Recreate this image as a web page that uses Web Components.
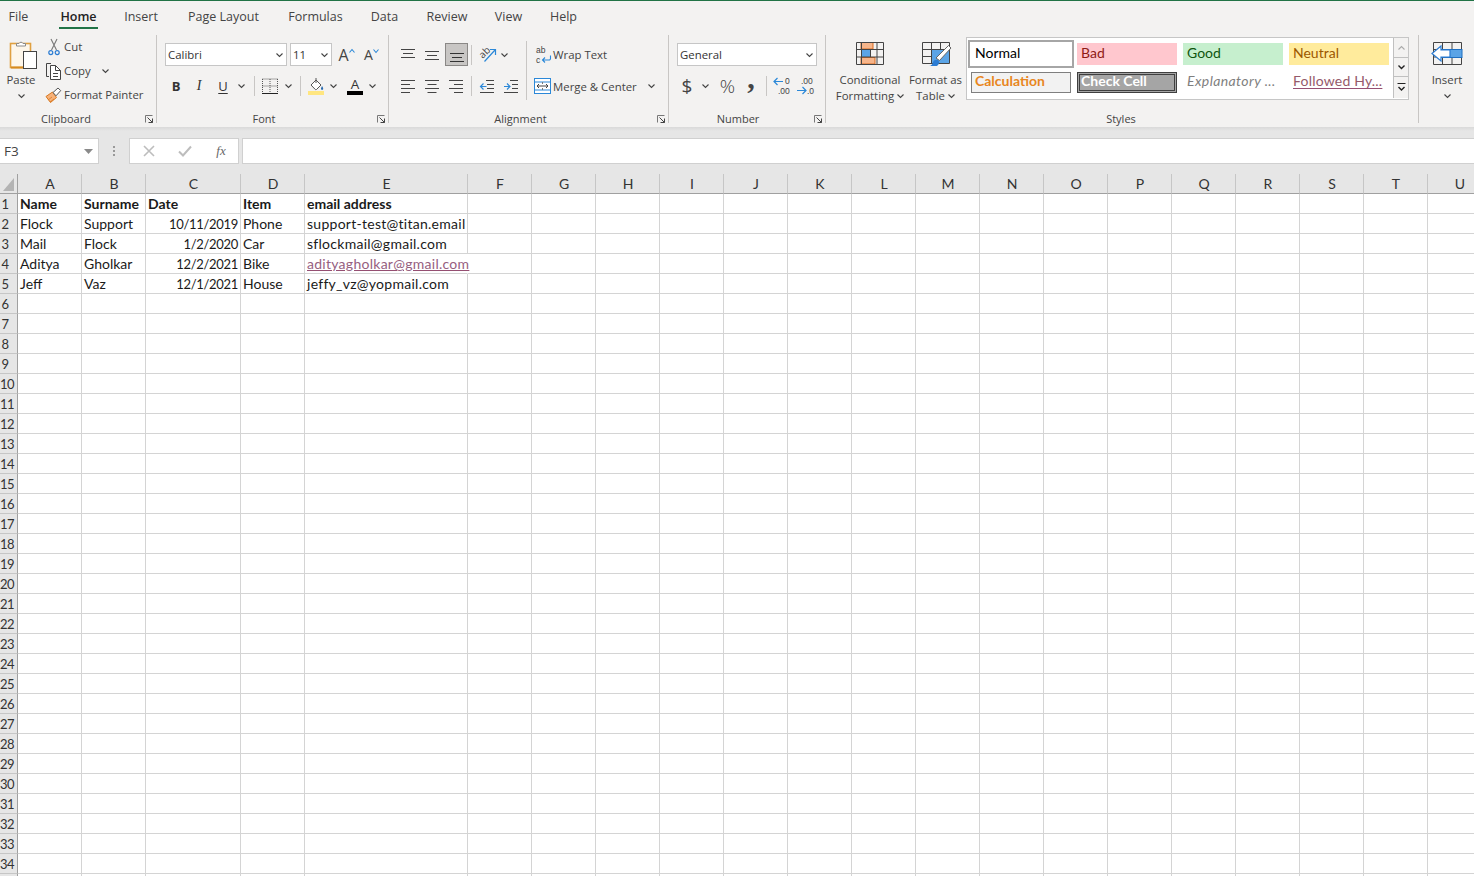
<!doctype html>
<html><head><meta charset="utf-8"><title>Excel</title>
<style>
html,body{margin:0;height:100%;overflow:hidden;background:#fff;font-family:"Open Sans","Noto Sans",sans-serif}
</style></head><body>
<xl-app></xl-app>
<script>
const UI='"Open Sans","Noto Sans",sans-serif';
const BLUE='#2b88d8', GR='#444', OR='#d86b20';
const SM='font-family="Liberation Sans" font-size="8.5" fill="#444"';
const I={
paste:[30,32,`<rect x="2.5" y="6.5" width="20" height="24" fill="#fdf6ea" stroke="#e0a040" stroke-width="1.6"/><path d="M3 30.5h19" stroke="#d68b1f" stroke-width="2"/><path d="M8.5 9V6.5h2.5a2.2 2.2 0 0 1 4 0h2.5V9z" fill="#fff" stroke="#8a8a8a"/><rect x="15.5" y="14.5" width="13" height="17" fill="#fff" stroke="#444"/>`],
cut:[12,18,`<path d="M3 1l5.5 11M9 1L3.5 12" stroke="#777" stroke-width="1.1" fill="none"/><circle cx="2.8" cy="14.6" r="2" fill="none" stroke="#2b7cd3" stroke-width="1.2"/><circle cx="9.2" cy="14.6" r="2" fill="none" stroke="#2b7cd3" stroke-width="1.2"/>`],
copy:[17,18,`<path d="M6 1.5H1.5v13H4" fill="none" stroke="#444"/><path d="M5.5 3.5h5l5 5v9h-10z" fill="#fff" stroke="#444"/><path d="M10.5 3.5v5h5M8 11.5h5M8 14.5h5" fill="none" stroke="#444"/>`],
painter:[17,16,`<path d="M1 9.5l6.5-4.5 4 5.5-6 5z" fill="#f7b27a" stroke="#d8781f"/><path d="M3 13l4-3M5 15l4-3" stroke="#d8781f" stroke-width=".8"/><path d="M8 5.5l5-4.5 2.7 2.6-4.7 5.2z" fill="#fff" stroke="#555"/>`],
borders:[16,17,`<path d="M.5 1h15M.5 8h15M.5 1v14M8 1v14M15.5 1v14" stroke="#555" stroke-dasharray="1 1" fill="none"/><path d="M0 15.5h16" stroke="#222"/>`],
fill:[17,18,`<path d="M3 8l5-5 5 5-4.5 4.500a1 1 0 0 1-1.200 0z" fill="#fff" stroke="#555"/><path d="M8 1v5" stroke="#555"/><path d="M14 9c1 1.500 1.600 2.400 1 3.400-.6.800-2 .6-2-.6 0-1 .6-1.800 1-2.800z" fill="#2b6cb0"/><rect x="0" y="14" width="16" height="4" fill="#ffe680"/>`],
atop:[14,14,`<path d="M0 1.500h14M2 5.500h10M0 9.500h14" stroke="#444"/>`],
amid:[14,14,`<path d="M0 3.500h14M2 7.500h10M0 11.500h14" stroke="#444"/>`],
abot:[14,14,`<path d="M0 5.500h14M2 9.500h10M0 13.500h14" stroke="#333"/>`],
aleft:[14,14,`<path d="M0 1.500h14M0 5.500h9M0 9.500h14M0 13.500h9" stroke="#444"/>`],
acen:[14,14,`<path d="M0 1.500h14M2.500 5.500h9M0 9.500h14M2.500 13.500h9" stroke="#444"/>`],
aright:[14,14,`<path d="M0 1.500h14M5 5.500h9M0 9.500h14M5 13.500h9" stroke="#444"/>`],
outd:[14,14,`<path d="M6 1.500h8M7 5.500h7M7 9.500h7M0 13.500h14" stroke="#444"/><path d="M.5 7.500h6M3.500 4.500l-3 3 3 3" fill="none" stroke="${BLUE}" stroke-width="1.200"/>`],
ind:[14,14,`<path d="M6 1.500h8M8 5.500h6M8 9.500h6M0 13.500h14" stroke="#444"/><path d="M0 7.500h6M3 4.500l3 3-3 3" fill="none" stroke="${BLUE}" stroke-width="1.200"/>`],
orient:[17,18,`<text x="0" y="10" transform="rotate(-45 5.500 7)" font-family="Open Sans" font-size="10" fill="#444">ab</text><path d="M5.500 15.500L16 4M11 3.500h5.500V9" fill="none" stroke="${BLUE}" stroke-width="1.200"/>`],
wrap:[15,18,`<text x="0" y="7" ${SM}>ab</text><text x="0" y="17" ${SM}>c</text><path d="M14.500 9.500v3a1.500 1.500 0 0 1-1.500 1.500H6.500M9 11.500l-2.500 2.500L9 16.500" fill="none" stroke="${BLUE}" stroke-width="1.100"/>`],
merge:[17,16,`<rect x=".5" y=".5" width="16" height="15" fill="#fff" stroke="${BLUE}"/><path d="M.5 4h16M.5 12h16" stroke="${BLUE}"/><path d="M8.500 4v2M8.500 10v2" stroke="#777"/><path d="M3 8h11M5 6l-2 2 2 2M12 6l2 2-2 2" fill="none" stroke="#444"/>`],
dinc:[17,18,`<path d="M0 4.500h9M3.500 1L0 4.500 3.500 8" fill="none" stroke="${BLUE}" stroke-width="1.200"/><text x="11" y="7" ${SM}>0</text><text x="4" y="17" ${SM}>.00</text>`],
ddec:[17,18,`<text x="4" y="7" ${SM}>.00</text><path d="M0 13.500h9M5.500 10L9 13.500 5.500 17" fill="none" stroke="${BLUE}" stroke-width="1.200"/><text x="10" y="17" ${SM}>.0</text>`],
cf:[28,23,`<rect x="5" y=".5" width="12" height="6.500" fill="#f7b58a" stroke="${OR}"/><rect x="5" y="15.500" width="14" height="6.500" fill="#f7b58a" stroke="${OR}"/><rect x="5.500" y="8" width="9" height="7" fill="#5ba4e6"/><path d="M.5.500h27v22H.5zM.5 7.500h27M.5 15h27M5.500.5v22M14.500 7v8M21 .5v22" fill="none" stroke="#444"/>`],
ft:[30,25,`<path d="M.5.500h27v21H.5zM.5 7.500h27M.5 14.500h27M9.500.5v21M18.500.5v21" fill="none" stroke="#444"/><rect x="10" y="8" width="17" height="13" fill="#5ba4e6"/><path d="M14 16L26.500 3.500l2.500 2.500L17.500 18.500z" fill="#fff" stroke="#666"/><path d="M7 24c2.500 0 3.500-2 4-4 1-2 3.500-3 5.500-1.500 1 1.500 1 3.500-1.500 5.500z" fill="#2b7cd3"/>`],
insert:[32,23,`<path d="M2.500.5h28v22h-28zM2.500 7.500h28M2.500 15h28M11.500.5v22M21 .5v22" fill="none" stroke="#444"/><rect x="11" y="7.500" width="20" height="8" fill="#5ba4e6" stroke="#1f6fc0"/><path d="M10 4L1 11.500 10 19v-4h9V8h-9z" fill="#fff" stroke="#2b7cd3" stroke-width="1.200"/>`],
launch:[8,8,`<path d="M.5 7.500V.5h7" fill="none" stroke="#777"/><path d="M2.500 2.500l5 5M7.500 3.500v4h-4" fill="none" stroke="#444"/>`],
chev:[7,4,`<path d="M.5.500l3 3 3-3" fill="none" stroke="#444" stroke-width="1.100"/>`],
chevup:[7,4,`<path d="M.5 3.500l3-3 3 3" fill="none" stroke="#aaa" stroke-width="1.100"/>`],
chevb:[7,4,`<path d="M.5.500l3 3 3-3" fill="none" stroke="#222" stroke-width="1.400"/>`],
more:[9,9,`<path d="M.5.500h8" stroke="#222"/><path d="M1.500 4l3 3 3-3" fill="none" stroke="#222" stroke-width="1.400"/>`],
caret:[9,5,`<path d="M0 0h9L4.500 5z" fill="#8a8a8a"/>`],
x:[12,12,`<path d="M1 1l10 10M11 1L1 11" stroke="#bdbdbd" stroke-width="1.600"/>`],
check:[14,12,`<path d="M1 6.500l4 4L13 1.500" fill="none" stroke="#bdbdbd" stroke-width="2"/>`],
growch:[6,4,`<path d="M.5 3.500l2.500-3 2.500 3" fill="none" stroke="#2b88d8" stroke-width="1.100"/>`],
shrinkch:[6,4,`<path d="M.5.500l2.500 3 2.500-3" fill="none" stroke="#2b88d8" stroke-width="1.100"/>`],
corner:[11,13,`<path d="M11 0v13H0z" fill="#b4b4b4"/>`]
};

function def(name,css,html,extra){
  customElements.define(name,class extends HTMLElement{
    constructor(){super();const s=this.attachShadow({mode:'open'});
      s.innerHTML=`<style>${css}</style>`+(typeof html==='function'?html(this):html);}
    connectedCallback(){extra&&extra(this)}
  });
}
customElements.define('xl-icon',class extends HTMLElement{
  constructor(){super();this.attachShadow({mode:'open'})}
  connectedCallback(){const [w,h,b]=I[this.getAttribute('name')];
    this.shadowRoot.innerHTML=`<style>:host{display:block;width:${w}px;height:${h}px;flex:none}svg{display:block;overflow:visible}</style><svg width="${w}" height="${h}" viewBox="0 0 ${w} ${h}">${b}</svg>`}
});
customElements.define('xl-tab',class extends HTMLElement{
  constructor(){super();this.attachShadow({mode:'open'})}
  connectedCallback(){const a=this.hasAttribute('active');
    this.shadowRoot.innerHTML=`<style>:host{display:flex;flex:none;width:${this.getAttribute('w')}px;height:29px;justify-content:center}
    span{display:block;font:${a?600:400} 12.5px/31px ${UI};color:${a?'#222':'#444'};white-space:nowrap;${a?'border-bottom:2px solid #217346;height:26px;padding:0 1px':''}}</style><span><slot></slot></span>`}
});
def('xl-tabs',`:host{display:flex;height:29px;background:#f3f2f1;border-top:1px solid #217346}`,`<slot></slot>`);
customElements.define('xl-group',class extends HTMLElement{
  constructor(){super();this.attachShadow({mode:'open'})}
  connectedCallback(){const nl=this.hasAttribute('nolaunch');
    this.shadowRoot.innerHTML=`<style>:host{display:block;flex:none;box-sizing:border-box;width:${this.getAttribute('w')}px;height:88px;margin-top:5px;position:relative;${this.hasAttribute('last')?'':'border-right:1px solid #c8c6c4'}}
    .b{height:76px}.f{height:12px;font:11px/16px ${UI};color:#444;text-align:center;padding-right:${this.getAttribute('pr')||0}px}
    xl-icon{position:absolute;right:3px;bottom:0}</style>
    <div class="b"><slot></slot></div><div class="f">${this.getAttribute('label')||''}</div>${nl?'':'<xl-icon name="launch"></xl-icon>'}`}
});
const base=`:host{display:block;height:76px;font:11.4px/16px ${UI};color:#444}
.row{display:flex;align-items:center;height:24px}
.c{display:flex;flex:none;justify-content:center;align-items:center}
.t{white-space:nowrap}
.sep{flex:none;width:1px;height:20px;background:#c8c6c4}
.sel{box-sizing:border-box;flex:none;align-self:flex-start;display:flex;align-items:center;justify-content:space-between;height:23px;background:#fff;border:1px solid #c6c6c6;padding:0 3px 0 2px;color:#333}
`;
def('xl-clipboard',base+`:host{display:flex}
.p{width:42px;display:flex;flex-direction:column;align-items:center}
.p xl-icon:first-child{margin:2px 0 3px 4px}
.p .lb{height:16px}.p xl-icon:last-child{margin-top:6px}
.r{margin-left:3px}.r .c{width:19px;justify-content:flex-start}`,`
<div class="p"><xl-icon name="paste"></xl-icon><div class="t lb">Paste</div><xl-icon name="chev"></xl-icon></div>
<div class="r">
<div class="row"><div class="c"><xl-icon name="cut" style="margin-left:3px"></xl-icon></div><div class="t">Cut</div></div>
<div class="row"><div class="c"><xl-icon name="copy"></xl-icon></div><div class="t" style="width:38px">Copy</div><xl-icon name="chev"></xl-icon></div>
<div class="row"><div class="c"><xl-icon name="painter"></xl-icon></div><div class="t">Format Painter</div></div>
</div>`);
def('xl-font',base+`:host{padding-top:8px;height:68px}
.row{margin-left:8px}.r2{margin-top:7px}
.bt{font-size:13px;color:#333}
.A{font-size:16px;color:#444}
.fc{display:flex;flex-direction:column;align-items:center;font-size:13.5px;line-height:14px;color:#333}
.fc i{display:block;width:16px;height:4px;background:#000}`,`
<div class="row">
<div class="sel" style="width:122px"><span>Calibri</span><xl-icon name="chev"></xl-icon></div>
<div class="sel" style="width:42px;margin-left:3px"><span>11</span><xl-icon name="chev"></xl-icon></div>
<div class="c A" style="margin-left:7px;width:15px;align-items:flex-start">A<xl-icon name="growch" style="margin-top:2px"></xl-icon></div>
<div class="c A" style="margin-left:11px;width:13px;font-size:14px;align-items:flex-start">A<xl-icon name="shrinkch" style="margin-top:2px"></xl-icon></div>
</div>
<div class="row r2">
<div class="c bt" style="width:22px;font-weight:700">B</div>
<div class="c bt" style="width:24px;font:italic 14px 'Liberation Serif',serif">I</div>
<div class="c bt" style="width:24px;text-decoration:underline;text-underline-offset:2px">U</div>
<div class="c" style="width:12px"><xl-icon name="chev"></xl-icon></div>
<div class="sep" style="margin-left:7px"></div>
<div class="c" style="margin-left:7px;width:16px"><xl-icon name="borders"></xl-icon></div>
<div class="c" style="width:20px"><xl-icon name="chev"></xl-icon></div>
<div class="sep" style="margin-left:2px"></div>
<div class="c" style="margin-left:7px;width:17px"><xl-icon name="fill"></xl-icon></div>
<div class="c" style="width:17px"><xl-icon name="chev"></xl-icon></div>
<div class="c fc" style="margin-left:5px;width:16px">A<i></i></div>
<div class="c" style="width:18px"><xl-icon name="chev"></xl-icon></div>
</div>`);
def('xl-alignment',base+`:host{display:flex}
.l{width:137px;padding-top:8px}.row{height:24px}.r2{margin-top:7px}
.w24{width:24px}.on{width:23px;box-sizing:border-box;height:23px;background:#c8c6c4;border:1px solid #8a8886;margin-left:1px;align-self:flex-start}
.v{flex:none;width:1px;height:59px;margin-top:6px;background:#c8c6c4}
.r{padding-top:8px}`,`
<div class="l">
<div class="row" style="margin-left:7px">
<div class="c w24"><xl-icon name="atop"></xl-icon></div><div class="c w24"><xl-icon name="amid"></xl-icon></div>
<div class="c on"><xl-icon name="abot"></xl-icon></div><div class="sep" style="margin-left:3px"></div>
<div class="c" style="margin-left:7px;width:17px"><xl-icon name="orient"></xl-icon></div><div class="c" style="width:16px"><xl-icon name="chev"></xl-icon></div></div>
<div class="row r2" style="margin-left:7px">
<div class="c w24"><xl-icon name="aleft"></xl-icon></div><div class="c w24"><xl-icon name="acen"></xl-icon></div><div class="c w24"><xl-icon name="aright"></xl-icon></div>
<div class="sep" style="margin-left:3px"></div>
<div class="c" style="margin-left:8px;width:14px"><xl-icon name="outd"></xl-icon></div><div class="c" style="margin-left:10px;width:14px"><xl-icon name="ind"></xl-icon></div></div>
</div>
<div class="v"></div>
<div class="r">
<div class="row" style="margin-left:9px"><xl-icon name="wrap"></xl-icon><div class="t" style="margin-left:2px">Wrap Text</div></div>
<div class="row r2" style="margin-left:7px"><xl-icon name="merge"></xl-icon><div class="t" style="margin-left:2px;width:93px;padding-top:2px;box-sizing:content-box">Merge &amp; Center</div><div class="c" style="width:10px"><xl-icon name="chev"></xl-icon></div></div>
</div>`);
def('xl-number',base+`:host{padding-top:8px;height:68px}
.row{margin-left:8px}.r2{margin-top:7px}
.s{font-size:19px;font-weight:400;color:#444}`,`
<div class="row"><div class="sel" style="width:140px"><span>General</span><xl-icon name="chev"></xl-icon></div></div>
<div class="row r2">
<div class="c s" style="width:20px">$</div><div class="c" style="width:16px"><xl-icon name="chev"></xl-icon></div>
<div class="c s" style="width:29px;font-size:19px;font-weight:300">%</div><div class="c s" style="width:18px;font:700 30px/14px 'Liberation Serif',serif;transform:translateY(-8px)">,</div>
<div class="sep" style="margin-left:6px"></div>
<div class="c" style="margin-left:7px;width:17px"><xl-icon name="dinc"></xl-icon></div>
<div class="c" style="margin-left:6px;width:17px"><xl-icon name="ddec"></xl-icon></div>
</div>`);
def('xl-bigbtn',base+`:host{flex:none;display:flex;flex-direction:column;align-items:center;width:var(--w,62px);text-align:center}
.ic{height:30px;margin:7px 0 0 var(--ml,0);display:flex;justify-content:center}
.lab{white-space:nowrap}
.ln{display:flex;align-items:center;justify-content:center;gap:3px;height:16px}`,
h=>{const [a,b]=(h.getAttribute('label')||'').split('|');return `<div class="ic"><xl-icon name="${h.getAttribute('icon')}"></xl-icon></div>
<div class="lab"><div class="ln">${a}</div><div class="ln">${b?b+' <xl-icon name="chev"></xl-icon>':'<xl-icon name="chev"></xl-icon>'}</div></div>`});
def('xl-gallery',base+`:host{box-sizing:border-box;flex:none;width:443px;height:63px;margin-top:2px;background:#fff;border:1px solid #c6c6c6;display:flex;font-size:14px;line-height:20px}
.g{display:grid;grid-template-columns:109px 106px 106px 105px;grid-template-rows:28px 22px;row-gap:3px;margin:2px 0 0 1px;width:426px;font-family:Lato,"Open Sans",sans-serif}
.s{box-sizing:border-box;height:22px;width:100px;padding:0 0 2px 4px;align-self:center;display:flex;align-items:center;white-space:nowrap}
.n{width:106px;height:28px;padding-left:5px;border:2px solid #a6a6a6;color:#000}
.bad{background:#ffc7ce;color:#8f1a16}.good{background:#c6efce;color:#0f560f}.neu{background:#ffeb9c;color:#9c5700}
.calc{margin-left:3px;background:#f2f2f2;border:1px solid #7f7f7f;padding-left:3px;color:#e8861e;font-weight:700;height:21px}
.chk{background:#a5a5a5;border:3px double #3f3f3f;padding-left:1px;color:#fff;font-weight:700;height:21px}
.exp{color:#7f7f7f;font-style:italic;padding-left:4px;letter-spacing:.4px}
.fol{color:#955a6a;letter-spacing:.2px}
.fol u{text-underline-offset:2px;text-decoration-color:#954f72}
.sb{flex:none;width:15px;margin-left:-1px;display:flex;flex-direction:column}
.sb div{box-sizing:border-box;flex:none;display:flex;align-items:center;justify-content:center;border:1px solid #c0c0c0;border-right:0;background:#f3f2f1;margin-bottom:-1px}`,`
<div class="g">
<div class="s n">Normal</div><div class="s bad">Bad</div><div class="s good">Good</div><div class="s neu">Neutral</div>
<div class="s calc">Calculation</div><div class="s chk">Check Cell</div><div class="s exp">Explanatory ...</div><div class="s fol"><u>Followed Hy...</u></div>
</div>
<div class="sb"><div style="height:20px;border-top:0"><xl-icon name="chevup"></xl-icon></div><div style="height:20px"><xl-icon name="chevb"></xl-icon></div><div style="height:22px;border-bottom:0"><xl-icon name="more"></xl-icon></div></div>`);
def('xl-styles',`:host{display:flex;height:76px}
.cf{margin-left:10px;--w:68px}.ft{--w:62px;margin-left:1px;--w:61px;--ml:2px}`,`
<xl-bigbtn class="cf" icon="cf" label="Conditional|Formatting"></xl-bigbtn>
<xl-bigbtn class="ft" icon="ft" label="Format as|Table"></xl-bigbtn>
<xl-gallery></xl-gallery>`);
def('xl-ribbon',`:host{display:flex;height:97px;background:#f3f2f1}`,`<slot></slot>`);
def('xl-formula',`:host{display:flex;flex:none;box-sizing:border-box;height:47px;padding-top:11px;background:linear-gradient(#d9d9d9 0,#e6e6e6 4px);font:13.5px/24px ${UI};color:#444}
.box{box-sizing:border-box;height:26px;background:#fff;border:1px solid #d0d0d0;flex:none;display:flex;align-items:center}
.nm{width:99px;padding:0 5px 0 4px;justify-content:space-between;border-left:0}
.d{width:30px;height:26px;display:flex;flex-direction:column;align-items:center;justify-content:center;gap:2px;flex:none}
.d i{width:2px;height:2px;background:#999;display:block}
.b{width:110px}.b span{flex:none;width:36px;display:flex;justify-content:center}
.fx{font:italic 13px "Liberation Serif",serif;color:#666}
.f{flex:1;margin-left:3px;border-right:0}`,`
<div class="box nm"><span>F3</span><xl-icon name="caret"></xl-icon></div>
<div class="d"><i></i><i></i><i></i></div>
<div class="box b"><span style="margin-left:1px"><xl-icon name="x"></xl-icon></span><span><xl-icon name="check"></xl-icon></span><span class="fx">fx</span></div>
<div class="box f"></div>`);
const COLS=[['A',64],['B',64],['C',95],['D',64],['E',163]];
'FGHIJKLMNOPQRST'.split('').forEach(c=>COLS.push([c,64]));COLS.push(['U',64]);
const DATA={1:['Name','Surname','Date','Item','email address'],
2:['Flock','Support','10/11/2019','Phone','support-test@titan.email'],
3:['Mail','Flock','1/2/2020','Car','sflockmail@gmail.com'],
4:['Aditya','Gholkar','12/2/2021','Bike','adityagholkar@gmail.com'],
5:['Jeff','Vaz','12/1/2021','House','jeffy_vz@yopmail.com']};
def('xl-sheet',`:host{display:block;flex:1;overflow:hidden;background:#fff;font:14px/19px Lato,"Open Sans",sans-serif;color:#1a1a1a}
.g{display:grid;grid-template-columns:18px ${COLS.map(c=>c[1]+'px').join(' ')};grid-auto-rows:20px;width:max-content}
.g>div{box-sizing:border-box;white-space:nowrap;padding:0 2px}
.g>.h{background:#e6e6e6;color:#333;border-right:1px solid #c6c6c6;border-bottom:1px solid #a0a0a0;text-align:center;padding:0 0 0 1px}
.k{background:#e6e6e6;display:flex;justify-content:flex-end;align-items:flex-end;border-right:1px solid #a0a0a0;border-bottom:1px solid #a0a0a0;padding:0 3px 2px 0!important}
.r{background:#e6e6e6;color:#333;border-right:1px solid #a0a0a0;border-bottom:1px solid #c6c6c6;padding:1px 0 0!important;display:flex;font-size:13px;letter-spacing:-.6px}
.r span{display:block;width:10px;flex:none;text-align:center}
.r span.w{width:14px}
.c{border-right:1px solid #d4d4d4;border-bottom:1px solid #d4d4d4}
.b{font-weight:700}.g>.n{text-align:right;font-size:13px;letter-spacing:-.3px;padding-top:1px}
.e{letter-spacing:.27px}
.o{border-right-color:transparent}
a{color:#96607f;text-decoration:underline;text-decoration-color:#954f72;text-underline-offset:1px}`,
()=>{let s='<div class="g"><div class="k"><xl-icon name="corner"></xl-icon></div>';
 COLS.forEach(c=>s+=`<div class="h">${c[0]}</div>`);
 for(let r=1;r<=35;r++){s+=`<div class="r">${r<35?`<span class="${r>9?'w':''}">${r}</span>`:''}</div>`;
  COLS.forEach((c,i)=>{const v=DATA[r]&&DATA[r][i];let cl='c';let t=v||'';
   if(r==1&&v)cl+=' b';if(r>1&&i==2&&v)cl+=' n';if(r>1&&i==4&&v)cl+=' e';
   if(r==4&&i==4){cl+=' o';t=`<a>${v}</a>`}
   s+=`<div class="${cl}">${t}</div>`})}
 return s+'</div>'});
def('xl-app',`:host{display:flex;flex-direction:column;width:1474px;height:876px;overflow:hidden}`,`
<xl-tabs>
<xl-tab w="37">File</xl-tab><xl-tab w="83" active>Home</xl-tab><xl-tab w="42">Insert</xl-tab><xl-tab w="123">Page Layout</xl-tab><xl-tab w="61">Formulas</xl-tab><xl-tab w="77">Data</xl-tab><xl-tab w="48">Review</xl-tab><xl-tab w="75">View</xl-tab><xl-tab w="35">Help</xl-tab>
</xl-tabs>
<xl-ribbon>
<xl-group w="157" pr="24" label="Clipboard"><xl-clipboard></xl-clipboard></xl-group>
<xl-group w="232" pr="17" label="Font"><xl-font></xl-font></xl-group>
<xl-group w="280" pr="16" label="Alignment"><xl-alignment></xl-alignment></xl-group>
<xl-group w="157" pr="18" label="Number"><xl-number></xl-number></xl-group>
<xl-group w="593" pr="2" label="Styles" nolaunch><xl-styles></xl-styles></xl-group>
<xl-group w="55" last nolaunch><xl-bigbtn icon="insert" label="Insert" style="--w:56px"></xl-bigbtn></xl-group>
</xl-ribbon>
<xl-formula></xl-formula>
<xl-sheet></xl-sheet>`);
</script>
</body></html>
